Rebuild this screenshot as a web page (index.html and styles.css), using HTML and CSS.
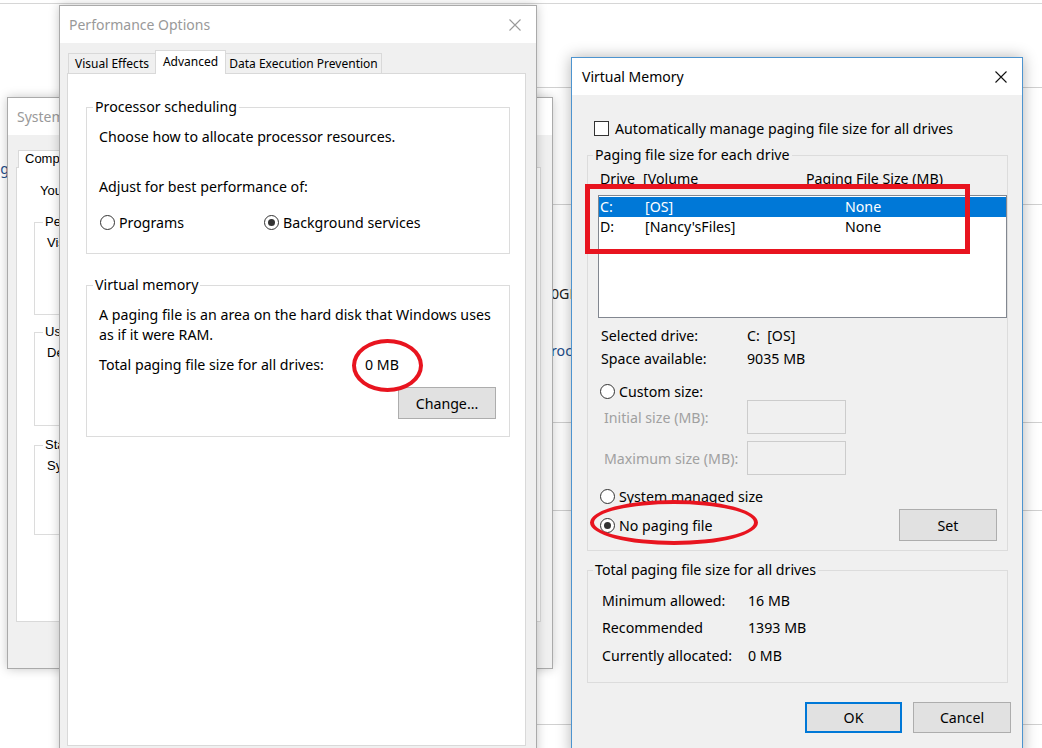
FILE: index.html
```html
<!DOCTYPE html>
<html lang="en">
<head>
  <meta charset="UTF-8">
  <title>Virtual Memory</title>
  <link rel="stylesheet" href="styles.css">
</head>
<body>
  <div class="desktop">

    <!-- control panel page sitting behind the dialogs -->
    <div class="backdrop">
      <div class="bd-top"></div>
      <div class="bd-main">
        <div class="bd-left">
          <div class="bd-link">Change settings</div>
        </div>
        <div class="bd-right">
          <div class="bd-row r1"></div>
          <div class="bd-row r2"></div>
          <div class="bd-row r3">
            <div class="bd-text t1">0GHz</div>
            <div class="bd-text t2">rocessor</div>
          </div>
          <div class="bd-row r4"></div>
          <div class="bd-row r5"></div>
        </div>
      </div>
    </div>

    <!-- System Properties -->
    <div class="window sys">
      <div class="titlebar">
        <span class="title">System Properties</span>
      </div>
      <div class="body">
        <div class="tabs">
          <div class="tab active">Computer Name</div>
          <div class="tab">Hardware</div>
          <div class="tab">Advanced</div>
        </div>
        <div class="panel">
          <p class="note">You must be logged on as an Administrator.</p>
          <fieldset class="group g1">
            <legend>Performance</legend>
            <p>Visual effects</p>
          </fieldset>
          <fieldset class="group g2">
            <legend>User Profiles</legend>
            <p>Desktop settings</p>
          </fieldset>
          <fieldset class="group g3">
            <legend>Startup and Recovery</legend>
            <p>System startup</p>
          </fieldset>
        </div>
        <div class="buttons">
          <div class="btn">OK</div>
          <div class="btn">Cancel</div>
          <div class="btn">Apply</div>
        </div>
      </div>
    </div>

    <!-- Performance Options -->
    <div class="window perf">
      <div class="titlebar">
        <span class="title">Performance Options</span>
        <svg class="close" width="12" height="12" viewBox="0 0 12 12"><path d="M0.5 0.5 L11.5 11.5 M11.5 0.5 L0.5 11.5" stroke="#9a9a9a" stroke-width="1.1" fill="none"/></svg>
      </div>
      <div class="body">
        <div class="tabs">
          <div class="tab t-visual">Visual Effects</div>
          <div class="tab t-adv active">Advanced</div>
          <div class="tab t-dep">Data Execution Prevention</div>
        </div>
        <div class="panel">
          <fieldset class="group">
            <legend>Processor scheduling</legend>
            <div class="inner">
              <p class="choose">Choose how to allocate processor resources.</p>
              <p class="adjust">Adjust for best performance of:</p>
              <div class="radios">
                <span class="radio r-programs"><span class="dot"></span>Programs</span>
                <span class="radio"><span class="dot on"></span>Background services</span>
              </div>
            </div>
          </fieldset>
          <fieldset class="group vmem">
            <legend>Virtual memory</legend>
            <div class="inner">
              <p class="desc">A paging file is an area on the hard disk that Windows uses<br>as if it were RAM.</p>
              <p class="total"><span class="k">Total paging file size for all drives:</span><span>0 MB</span></p>
              <div class="change-row"><div class="btn change">Change...</div></div>
            </div>
          </fieldset>
        </div>
      </div>
    </div>

    <!-- Virtual Memory -->
    <div class="window vm">
      <div class="titlebar">
        <span class="title">Virtual Memory</span>
        <svg class="close" width="12" height="12" viewBox="0 0 12 12"><path d="M0.5 0.5 L11.5 11.5 M11.5 0.5 L0.5 11.5" stroke="#111" stroke-width="1.1" fill="none"/></svg>
      </div>
      <div class="body">
        <div class="check-row"><span class="box"></span>Automatically manage paging file size for all drives</div>

        <fieldset class="group drives">
          <legend>Paging file size for each drive</legend>
          <div class="lv-head">
            <span class="c-drive">Drive</span><span class="c-vol">[Volume</span><span class="c-size">Paging File Size (MB)</span>
          </div>
          <div class="listbox">
            <div class="lv-row selected"><span class="c-drive">C:</span><span class="c-name">[OS]</span><span>None</span></div>
            <div class="lv-row"><span class="c-drive">D:</span><span class="c-name">[Nancy'sFiles]</span><span>None</span></div>
          </div>
          <div class="kv sel"><span class="k">Selected drive:</span><span>C:&nbsp;&nbsp;[OS]</span></div>
          <div class="kv space"><span class="k">Space available:</span><span>9035 MB</span></div>
          <div class="radio-row custom"><span class="radio"><span class="dot"></span>Custom size:</span></div>
          <div class="size-row first"><span class="lbl">Initial size (MB):</span><span class="field"></span></div>
          <div class="size-row"><span class="lbl">Maximum size (MB):</span><span class="field"></span></div>
          <div class="radio-row managed"><span class="radio"><span class="dot"></span>System managed size</span></div>
          <div class="radio-row last">
            <span class="radio"><span class="dot on"></span>No paging file</span>
            <div class="btn set">Set</div>
          </div>
        </fieldset>

        <fieldset class="group totals">
          <legend>Total paging file size for all drives</legend>
          <div class="kv t-min"><span class="k">Minimum allowed:</span><span>16 MB</span></div>
          <div class="kv t-rec"><span class="k">Recommended</span><span>1393 MB</span></div>
          <div class="kv t-cur"><span class="k">Currently allocated:</span><span>0 MB</span></div>
        </fieldset>

        <div class="dlg-buttons">
          <div class="btn ok">OK</div>
          <div class="btn">Cancel</div>
        </div>
      </div>
    </div>

    <!-- red pen marks drawn over the dialogs -->
    <div class="mark ring-total"></div>
    <div class="mark box-drives"></div>
    <div class="mark ring-nopage"></div>
  </div>
</body>
</html>
```

FILE: styles.css
```css
* {
  box-sizing: border-box;
}

body {
  margin: 0;
  overflow: hidden;
  background: #fff;
}

.desktop {
  position: relative;
  width: 1042px;
  height: 748px;
  overflow: hidden;
  background: #fff;
  font-family: "Noto Sans", sans-serif;
  font-size: 14.2px;
  color: #000;
}

p {
  margin: 0;
  line-height: 20px;
}

/* page behind */
.backdrop {
  width: 100%;
  height: 100%;
}

.bd-top {
  height: 4px;
  border-bottom: 1px solid #d6d6d6;
}

.bd-main {
  display: flex;
}

.bd-left {
  width: 530px;
  padding-top: 155px;
  overflow: hidden;
}

.bd-link {
  line-height: 20px;
  color: #1e4e8c;
  margin-left: -92px;
  white-space: nowrap;
}

.bd-right {
  flex: 1;
}

.bd-row {
  border-bottom: 1px solid #d0d0d0;
  padding-left: 21px;
  white-space: nowrap;
}

.bd-row.r1 { height: 84px; }
.bd-row.r2 { height: 117px; }
.bd-row.r3 { height: 218px; padding-top: 79px; }
.bd-row.r4 { height: 88px; }
.bd-row.r5 { height: 214px; }

.bd-text {
  line-height: 20px;
  color: #222;
}

.bd-text.t2 {
  margin-top: 37px;
  color: #1e4e8c;
}

/* windows */
.window {
  position: absolute;
  background: #f0f0f0;
  border: 1px solid #aaa;
  box-shadow: 0 0 10px rgba(0, 0, 0, 0.22);
}

.titlebar {
  height: 37px;
  background: #fff;
  display: flex;
  align-items: center;
  justify-content: space-between;
}

.title {
  font-size: 14px;
  color: #999;
}

.btn {
  background: #e1e1e1;
  border: 1px solid #adadad;
  display: flex;
  align-items: center;
  justify-content: center;
}

.group {
  margin: 0;
  border: 1px solid #dcdcdc;
  min-width: 0;
}

.group legend {
  padding: 0 2px;
  line-height: 20px;
}

.tabs {
  display: flex;
  align-items: flex-end;
}

.tab {
  border: 1px solid #d9d9d9;
  border-bottom: none;
  background: #f0f0f0;
  text-align: center;
  white-space: nowrap;
}

.tab.active {
  background: #fff;
  position: relative;
  z-index: 1;
}

.panel {
  background: #fff;
  border: 1px solid #d9d9d9;
}

/* radio and check glyphs */
.radio {
  display: inline-flex;
  align-items: center;
  gap: 4px;
  white-space: nowrap;
}

.dot {
  width: 15px;
  height: 15px;
  border: 1px solid #333;
  border-radius: 50%;
  background: #fff;
  display: flex;
  align-items: center;
  justify-content: center;
}

.dot.on::after {
  content: "";
  width: 7px;
  height: 7px;
  border-radius: 50%;
  background: #333;
}

/* System Properties */
.sys {
  left: 7px;
  top: 97px;
  width: 546px;
  height: 572px;
  z-index: 1;
  font-family: "Liberation Sans", Arial, sans-serif;
  font-size: 13px;
}

.sys .titlebar {
  padding-left: 9px;
}

.sys .title {
  font-family: "Noto Sans", sans-serif;
}

.sys .body {
  padding: 15px 11px 0 8px;
}

.sys .tabs {
  margin-left: 2px;
}

.sys .tab {
  height: 17px;
  line-height: 16px;
  padding: 0 6px;
}

.sys .tab.active {
  height: 18px;
  margin-bottom: -1px;
}

.sys .panel {
  height: 455px;
  padding: 13px 17px 0 17px;
}

.sys .note {
  padding-left: 6px;
  white-space: nowrap;
}

.sys .group {
  padding: 0 0 0 8px;
}

.sys .group p {
  padding-left: 4px;
  margin-top: 1px;
  white-space: nowrap;
}

.sys .g1 { margin-top: 11px; height: 103px; }
.sys .g2 { margin-top: 7px; height: 104px; }
.sys .g3 { margin-top: 9px; height: 100px; }

.sys .buttons {
  display: flex;
  justify-content: flex-end;
  gap: 6px;
  margin-top: 12px;
  padding-right: 9px;
}

.sys .buttons .btn {
  width: 75px;
  height: 26px;
}

/* Performance Options */
.perf {
  left: 59px;
  top: 5px;
  width: 478px;
  height: 760px;
  z-index: 2;
}

.perf .titlebar {
  padding: 0 15px 0 9px;
}

.perf .body {
  padding: 7px 10px 0 7px;
}

.perf .tabs {
  margin-left: 1px;
  height: 23px;
}

.perf .tab {
  height: 20px;
  font-size: 12px;
  line-height: 19px;
}

.perf .tab.active {
  height: 24px;
  margin-bottom: -1px;
  line-height: 22px;
}

.t-visual { width: 88px; margin-right: -1px; }
.t-adv { width: 71px; margin-right: -1px; }
.t-dep { width: 157px; }

.perf .panel {
  height: 673px;
  padding: 23px 15px 0 18px;
}

.perf .group {
  padding: 0 0 21px 6px;
}

.perf .inner {
  padding-left: 6px;
}

.choose { margin-top: 10px; }
.adjust { margin-top: 30px; }

.radios {
  display: flex;
  margin-top: 15px;
  height: 20px;
  align-items: center;
  padding-left: 1px;
}

.r-programs {
  width: 164px;
}

.perf .vmem {
  margin-top: 21px;
  padding-bottom: 17px;
}

.desc {
  margin-top: 10px;
  white-space: nowrap;
}

.total {
  margin-top: 10px;
  display: flex;
}

.total .k {
  width: 266px;
}

.change-row {
  display: flex;
  justify-content: flex-end;
  margin-top: 12px;
  padding-right: 13px;
}

.change {
  width: 98px;
  height: 32px;
}

/* Virtual Memory */
.vm {
  left: 571px;
  top: 57px;
  width: 452px;
  height: 700px;
  z-index: 3;
  border-color: #4d94cf;
  box-shadow: 0 0 14px rgba(0, 0, 0, 0.3);
}

.vm .titlebar {
  padding: 0 15px 0 10px;
}

.vm .title {
  color: #000;
}

.vm .body {
  padding: 23px 14px 0 15px;
}

.check-row {
  display: flex;
  align-items: center;
  gap: 6px;
  height: 20px;
  margin-left: 7px;
  white-space: nowrap;
}

.box {
  width: 15px;
  height: 15px;
  border: 1px solid #333;
  background: #fff;
}

.drives {
  margin-top: 7px;
  padding: 0 0 9px 10px;
}

.drives legend {
  margin-left: -5px;
}

.totals legend {
  margin-left: -9px;
}

.lv-head {
  display: flex;
  margin-top: 4px;
  line-height: 20px;
  padding-left: 2px;
  white-space: nowrap;
}

.lv-head .c-drive { width: 43px; }
.lv-head .c-vol { width: 163px; }

.listbox {
  margin-top: 6px;
  height: 123px;
  border: 1px solid #828790;
  background: #fff;
  padding: 1px 0;
}

.lv-row {
  display: flex;
  height: 20px;
  line-height: 20px;
  padding-left: 1px;
  white-space: nowrap;
}

.lv-row.selected {
  background: #0078d7;
  color: #fff;
}

.lv-row .c-drive { width: 45px; }
.lv-row .c-name { width: 200px; }

.kv {
  display: flex;
  line-height: 20px;
  padding-left: 3px;
  white-space: nowrap;
}

.kv .k {
  width: 146px;
}

.kv.sel { margin-top: 8px; }
.kv.space { margin-top: 3px; }

.radio-row {
  display: flex;
  align-items: center;
  height: 20px;
  padding-left: 2px;
}

.radio-row.custom { margin-top: 12px; }
.radio-row.managed { margin-top: 11px; }

.radio-row.last {
  margin-top: 3px;
  height: 32px;
  justify-content: space-between;
}

.size-row {
  display: flex;
  align-items: center;
  height: 34px;
  margin-top: 7px;
}

.size-row.first {
  margin-top: -1px;
}

.size-row .lbl {
  width: 149px;
  padding-left: 6px;
  color: #a0a0a0;
  white-space: nowrap;
}

.field {
  width: 99px;
  height: 34px;
  border: 1px solid #cccccc;
  background: #f0f0f0;
}

.set {
  width: 98px;
  height: 32px;
  margin-right: 10px;
}

.totals {
  margin-top: 9px;
  padding: 0 0 16px 14px;
}

.totals .kv {
  padding-left: 0;
}

.kv.t-min { margin-top: 11px; }
.kv.t-rec { margin-top: 7px; }
.kv.t-cur { margin-top: 8px; }

.dlg-buttons {
  display: flex;
  justify-content: flex-end;
  gap: 11px;
  margin-top: 19px;
  margin-right: -3px;
}

.dlg-buttons .btn {
  width: 98px;
  height: 31px;
}

.dlg-buttons .ok {
  width: 97px;
  border: 2px solid #0078d7;
}

/* red pen marks */
.mark {
  position: absolute;
  z-index: 4;
  border: 4px solid #e8141f;
}

.ring-total {
  left: 352px;
  top: 339px;
  width: 71px;
  height: 53px;
  border-radius: 50%;
}

.box-drives {
  left: 585px;
  top: 184px;
  width: 385px;
  height: 70px;
  border-width: 5px;
}

.ring-nopage {
  left: 590px;
  top: 500px;
  width: 168px;
  height: 45px;
  border-radius: 50%;
}
```
